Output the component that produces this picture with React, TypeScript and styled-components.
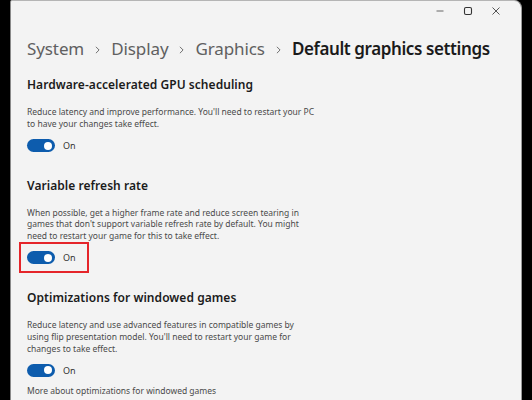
import React from 'react';
import styled, { createGlobalStyle } from 'styled-components';

const GlobalStyle = createGlobalStyle`
  html, body {
    margin: 0;
    padding: 0;
    background: #000;
    height: 400px;
    overflow: hidden;
  }
  body {
    font-family: "Noto Sans", "Open Sans", sans-serif;
  }
`;

const sections = [
  {
    title: 'Hardware-accelerated GPU scheduling',
    lines: [
      "Reduce latency and improve performance. You'll need to restart your PC",
      'to have your changes take effect.',
    ],
  },
  {
    title: 'Variable refresh rate',
    lines: [
      'When possible, get a higher frame rate and reduce screen tearing in',
      "games that don't support variable refresh rate by default. You might",
      'need to restart your game for this to take effect.',
    ],
    highlight: true,
  },
  {
    title: 'Optimizations for windowed games',
    lines: [
      'Reduce latency and use advanced features in compatible games by',
      "using flip presentation model. You'll need to restart your game for",
      'changes to take effect.',
    ],
    link: 'More about optimizations for windowed games',
  },
];

function Chevron() {
  return (
    <ChevronIcon viewBox="0 0 6 10" width="5" height="8">
      <path d="M1 1 L5 5 L1 9" fill="none" stroke="#6a6a6a" strokeWidth="1.2" />
    </ChevronIcon>
  );
}

function App() {
  return (
    <>
      <GlobalStyle />
      <Window>
        <TitleBar>
          <ControlButton>
            <svg width="10" height="10" viewBox="0 0 10 10">
              <path d="M1.5 5 H8.5" stroke="#666" strokeWidth="1" />
            </svg>
          </ControlButton>
          <ControlButton>
            <svg width="10" height="10" viewBox="0 0 10 10">
              <rect x="1.5" y="1.5" width="7" height="7" rx="1.5" fill="none" stroke="#333" strokeWidth="1.1" />
            </svg>
          </ControlButton>
          <ControlButton>
            <svg width="10" height="10" viewBox="0 0 10 10">
              <path d="M1.5 1.5 L8.5 8.5 M8.5 1.5 L1.5 8.5" stroke="#555" strokeWidth="1" />
            </svg>
          </ControlButton>
        </TitleBar>
        <Breadcrumb>
          <Crumb>System</Crumb>
          <Chevron />
          <Crumb>Display</Crumb>
          <Chevron />
          <Crumb>Graphics</Crumb>
          <Chevron />
          <Crumb $current>Default graphics settings</Crumb>
        </Breadcrumb>
        {sections.map((s) => (
          <Section key={s.title}>
            <Heading>{s.title}</Heading>
            <Description>
              {s.lines.map((l) => (
                <div key={l}>{l}</div>
              ))}
            </Description>
            <ToggleRow $highlight={!!s.highlight}>
              <Toggle>
                <Knob />
              </Toggle>
              <ToggleLabel>On</ToggleLabel>
            </ToggleRow>
            {s.link && <MoreLink>{s.link}</MoreLink>}
          </Section>
        ))}
      </Window>
    </>
  );
}

const Window = styled.div`
  margin-left: 10px;
  width: 512px;
  height: 420px;
  box-sizing: border-box;
  background: #f3f3f3;
  border-top: 1px solid #b5b5b5;
  border-left: 1px solid #8a8a8a;
  border-right: 1px solid #9a9a9a;
  border-top-right-radius: 8px;
  border-top-left-radius: 2px;
  overflow: hidden;
`;

const TitleBar = styled.div`
  display: flex;
  justify-content: flex-end;
  align-items: center;
  height: 20px;
  padding-right: 11px;
`;

const ControlButton = styled.div`
  width: 28px;
  height: 20px;
  display: flex;
  align-items: center;
  justify-content: center;
`;

const Breadcrumb = styled.div`
  display: flex;
  align-items: center;
  gap: 11px;
  padding-left: 16px;
  margin-top: 16px;
  height: 24px;
  white-space: nowrap;
`;

const Crumb = styled.span<{ $current?: boolean }>`
  font-size: 17px;
  line-height: 24px;
  font-weight: ${(p) => (p.$current ? 600 : 400)};
  color: ${(p) => (p.$current ? '#1a1a1a' : '#606060')};
  letter-spacing: ${(p) => (p.$current ? '-0.4px' : '-0.1px')};
`;

const ChevronIcon = styled.svg`
  display: block;
  margin-top: 1px;
`;

const Section = styled.div`
  padding-left: 16px;
  padding-top: 15px;
  padding-bottom: 8px;
  &:first-of-type {
    padding-top: 0;
  }
`;

const Heading = styled.div`
  font-size: 12px;
  line-height: 18px;
  font-weight: 600;
  color: #1b1b1b;
  letter-spacing: 0.05px;
`;

const Description = styled.div`
  margin-top: 12px;
  font-size: 8.5px;
  line-height: 11.8px;
  color: #4a4a4a;
  white-space: nowrap;
`;

const ToggleRow = styled.div<{ $highlight: boolean }>`
  position: relative;
  display: flex;
  align-items: center;
  gap: 8px;
  height: 16px;
  margin-top: 8px;
  &::after {
    content: '';
    display: ${(p) => (p.$highlight ? 'block' : 'none')};
    position: absolute;
    left: -8px;
    top: -8px;
    width: 70px;
    height: 31px;
    box-sizing: border-box;
    border: 2px solid #e5252a;
  }
`;

const Toggle = styled.div`
  width: 28px;
  height: 13px;
  border-radius: 7px;
  background: #0d5cad;
  position: relative;
`;

const Knob = styled.div`
  position: absolute;
  right: 3px;
  top: 2.5px;
  width: 8px;
  height: 8px;
  border-radius: 50%;
  background: #fff;
`;

const ToggleLabel = styled.span`
  font-size: 9px;
  color: #333;
`;

const MoreLink = styled.div`
  margin-top: 7px;
  font-size: 8.5px;
  line-height: 12px;
  color: #4a4a4a;
`;

export default App;
